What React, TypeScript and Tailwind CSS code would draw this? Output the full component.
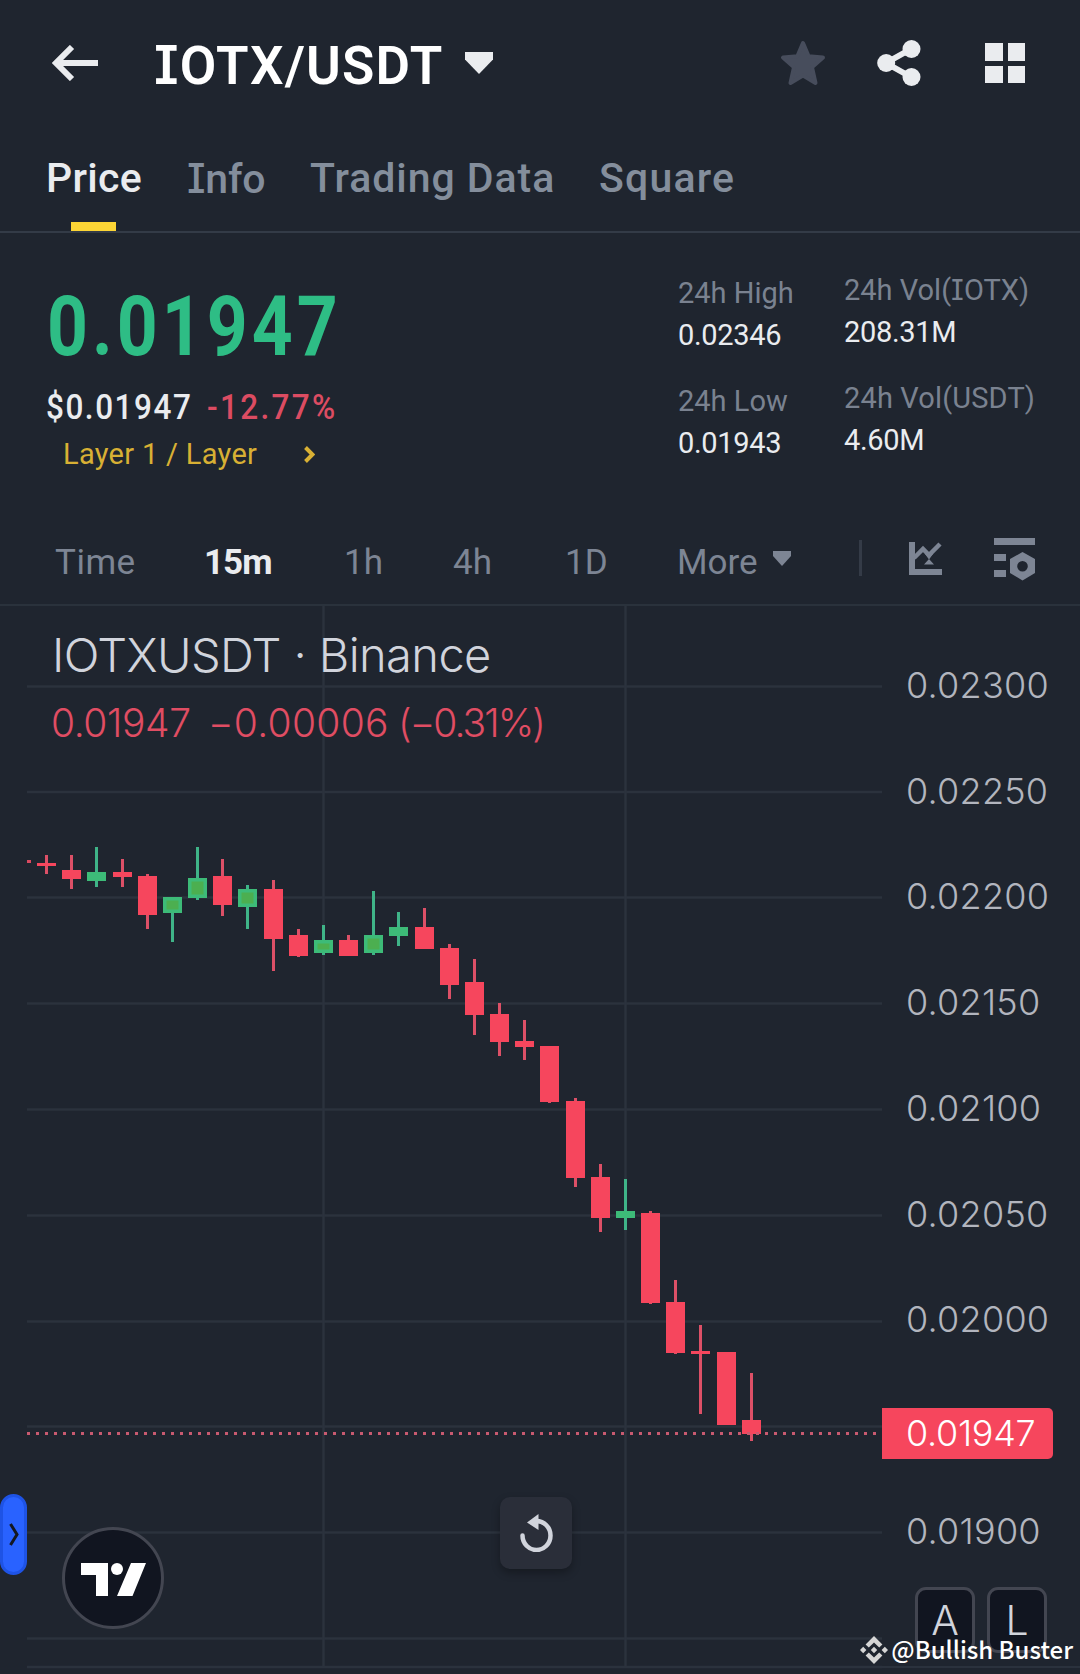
import type { ReactNode } from "react";

type Candle = [x: number, top: number, bottom: number, high: number, low: number, up?: boolean];

const candles: Candle[] = [
  [46.5, 863, 866, 855, 874],
  [71.5, 870, 879, 855, 889],
  [96.5, 872, 881, 847, 887, true],
  [122.5, 872, 877, 859, 887],
  [147.5, 876, 915, 874, 929],
  [172.5, 897, 913, 897, 942, true],
  [197.5, 878, 898, 847, 900, true],
  [222.5, 876, 905, 859, 916],
  [247.5, 889, 907, 885, 929, true],
  [273.5, 889, 939, 880, 971],
  [298.5, 935, 956, 929, 957],
  [323.5, 940, 953, 925, 955, true],
  [348.5, 940, 956, 935, 956],
  [373.5, 935, 953, 891, 955, true],
  [398.5, 927, 936, 912, 946, true],
  [424.5, 927, 949, 908, 949],
  [449.5, 948, 985, 944, 999],
  [474.5, 982, 1015, 959, 1035],
  [499.5, 1014, 1042, 1003, 1056],
  [524.5, 1041, 1047, 1020, 1060],
  [549.5, 1046, 1102, 1046, 1103],
  [575.5, 1101, 1178, 1098, 1187],
  [600.5, 1177, 1218, 1164, 1232],
  [625.5, 1211, 1218, 1179, 1230, true],
  [650.5, 1213, 1303, 1211, 1304],
  [675.5, 1302, 1353, 1280, 1354],
  [700.5, 1351, 1354, 1325, 1414],
  [726.5, 1352, 1425, 1352, 1425],
  [751.5, 1420, 1434, 1373, 1441],
];

const gridY = [686.5, 792, 897.5, 1003.5, 1109.5, 1215.5, 1321.5, 1426.5, 1532.5, 1638.5];

const axisLabels = ["0.02300", "0.02250", "0.02200", "0.02150", "0.02100", "0.02050", "0.02000", "", "0.01900"];

/* Capital I drawn with slab serifs, as in the brand typeface. */
function SerifI() {
  return <span className="font-['Inter'] [font-feature-settings:'cv08']">I</span>;
}

function Caret({ className }: { className: string }) {
  return (
    <svg viewBox="0 0 28 22" className={className} preserveAspectRatio="none">
      <path d="M0 0H28V7.5L14 22L0 7.5Z" fill="currentColor" />
    </svg>
  );
}

function Header() {
  return (
    <header className="flex h-[126px] items-center pl-[52px] text-[#eaecef]">
      <svg width="46" height="36" viewBox="0 0 46 36" fill="none" stroke="currentColor" strokeWidth="6">
        <path d="M46 18H5M20 2L4 18L20 34" />
      </svg>
      <h1 className="ml-[56px] w-[288px] pt-1.5 text-[53px] leading-none font-semibold tracking-[1.2px] whitespace-nowrap text-white">
        <SerifI />
        OTX/USDT
      </h1>
      <Caret className="ml-[23px] h-[22px] w-7" />
      <svg width="46" height="46" viewBox="0 0 46 46" className="ml-[287px] text-[#474d5c]">
        <path
          d="M23 3L28.6 16.2L43 17.5L32 27.2L35.5 43L23 35.6L10.5 43L14 27.2L3 17.5L17.4 16.2Z"
          fill="currentColor"
          stroke="currentColor"
          strokeWidth="4"
          strokeLinejoin="round"
        />
      </svg>
      <svg width="44" height="46" viewBox="0 0 44 46" className="ml-[51px]" fill="currentColor">
        <path d="M34 9L9 23L34 37" fill="none" stroke="currentColor" strokeWidth="6" />
        <circle cx="34.5" cy="9" r="9" />
        <circle cx="9.2" cy="23" r="9" />
        <circle cx="34.5" cy="37" r="9" />
      </svg>
      <div className="ml-[64px] grid h-10 w-10 grid-cols-2 gap-[5px]">
        <i className="bg-current" />
        <i className="bg-current" />
        <i className="bg-current" />
        <i className="bg-current" />
      </div>
    </header>
  );
}

function Tabs() {
  return (
    <nav className="flex h-[107px] border-b-2 border-[#333b47] pt-8 pl-[46px] text-[41px] leading-10 font-medium whitespace-nowrap text-[#848e9c]">
      <div className="flex w-[141px] flex-col tracking-[0.3px] text-[#eaecef]">
        <span>Price</span>
        <span className="mt-6 ml-[25px] h-[9px] w-[45px] bg-[#fcd535]" />
      </div>
      <span className="w-[123px] tracking-[-0.2px]">
        <SerifI />
        nfo
      </span>
      <span className="w-[289px] tracking-[0.95px]">Trading Data</span>
      <span className="tracking-[1.2px]">Square</span>
    </nav>
  );
}

function Stat({ label, value }: { label: ReactNode; value: string }) {
  return (
    <div className="text-[29px] leading-[42px] whitespace-nowrap">
      <div className="text-[#7a8290]">{label}</div>
      <div className="tracking-[-0.3px] text-[#eaecef]">{value}</div>
    </div>
  );
}

function Summary() {
  return (
    <section className="flex h-[287px]">
      <div className="w-[678px] pt-[52px] pl-[47px] whitespace-nowrap">
        <div className="origin-left scale-x-86 text-[83px] leading-[84px] font-bold tracking-[4.7px] text-[#2ebd85]">
          0.01947
        </div>
        <div className="-ml-px mt-[18px] flex text-[35px] leading-[42px] font-medium">
          <span className="w-[161px] origin-left scale-x-90 tracking-[1.7px] text-[#eaecef]">$0.01947</span>
          <span className="origin-left scale-x-90 tracking-[2.6px] text-[#dc4c62]">-12.77%</span>
        </div>
        <div className="mt-[7px] flex items-center pl-[16px] text-[29px] leading-9 text-[#d8b034]">
          <span className="w-[241px] tracking-[0.3px]">Layer 1 / Layer</span>
          <svg width="11" height="17" viewBox="0 0 11 17" fill="none" stroke="currentColor" strokeWidth="4">
            <path d="M1.5 1.5L8.5 8.5L1.5 15.5" />
          </svg>
        </div>
      </div>
      <div className="flex w-[166px] flex-col gap-6 pt-[39px]">
        <Stat label="24h High" value="0.02346" />
        <Stat label="24h Low" value="0.01943" />
      </div>
      <div className="flex flex-col gap-6 pt-9">
        <Stat
          label={
            <>
              24h Vol(
              <SerifI />
              OTX)
            </>
          }
          value="208.31M"
        />
        <Stat label={<span className="tracking-[0.15px]">24h Vol(USDT)</span>} value="4.60M" />
      </div>
    </section>
  );
}

function Intervals() {
  return (
    <div className="flex h-[86px] items-center border-b-2 border-[#2a323c] pl-[55px] text-[35px] leading-none whitespace-nowrap text-[#7d8594]">
      <span className="w-[149px] tracking-[0.5px]">Time</span>
      <span className="w-[140px] font-bold tracking-[-1px] text-[#eaecef]">15m</span>
      <span className="w-[109px]">1h</span>
      <span className="w-[112px]">4h</span>
      <span className="w-[112px]">1D</span>
      <span className="w-[96px]">More</span>
      <Caret className="mb-2 h-[15px] w-[18px]" />
      <span className="mb-2 ml-[68px] h-9 w-[3px] bg-[#343b47]" />
      <svg width="34" height="33" viewBox="0 0 34 33" className="mb-2 ml-[47px]" fill="none" stroke="currentColor">
        <path d="M3 0V30H33" strokeWidth="6" />
        <path d="M5 16L14 7L20 13L31 2" strokeWidth="4.5" />
        <path d="M20 17L25 22.5H15ZM16 12H24L20 17.5Z" fill="currentColor" stroke="none" />
      </svg>
      <svg width="42" height="43" viewBox="0 0 42 43" className="mb-1.5 ml-[51px]" fill="currentColor">
        <path d="M0 0H41V7H0ZM0 16H12V23H0ZM0 32H12V39H0Z" />
        <path
          fillRule="evenodd"
          d="M28.5 14L41 21V35L28.5 42.5L16 35V21ZM28.5 23A5.3 5.3 0 1 0 28.5 33.6A5.3 5.3 0 1 0 28.5 23Z"
        />
      </svg>
    </div>
  );
}

function CandlePlot() {
  return (
    <svg width="882" height="1068" viewBox="0 606 882 1068" className="shrink-0">
      <g stroke="#2b323d" strokeWidth="2.5">
        {gridY.map((y) => (
          <path key={y} d={`M27 ${y}H882`} />
        ))}
        <path d="M27 1667H882M323.5 606V1666M625.5 606V1666" />
      </g>
      <rect x="27" y="860" width="4" height="3" fill="#d94a60" />
      {candles.map(([x, top, bottom, high, low, up]) => (
        <g key={x}>
          <rect x={x - 1.5} y={high} width="3" height={low - high} fill={up ? "#3fb488" : "#dc5067"} />
          <rect x={x - 9.5} y={top} width="19" height={bottom - top} fill={up ? "#3dbb78" : "#f6465d"} />
          {up && bottom - top > 10 && (
            <rect x={x - 6} y={top + 3.5} width="12" height={bottom - top - 7} fill="#4caf50" />
          )}
        </g>
      ))}
      <path d="M27 1433.5H880" stroke="#c85a70" strokeWidth="3" strokeDasharray="3 6" />
    </svg>
  );
}

function ScaleButton({ children }: { children: string }) {
  return (
    <span className="flex h-[66px] w-[60px] items-center justify-center rounded-[11px] border-3 border-[#434651] bg-[#111520] text-[41px] leading-none font-light text-[#d1d4dc]">
      {children}
    </span>
  );
}

function PriceAxis() {
  return (
    <div className="relative w-[198px] pt-[27px] font-['Inter'] text-[36px] font-[350] text-[#b2b5be]">
      {axisLabels.map((label, i) => (
        <div key={i} className="h-[105.72px] pt-[30px] pl-[24px] leading-[44px] tracking-[0.25px]">
          {label}
        </div>
      ))}
      <div className="absolute top-[802px] left-0 flex h-[51px] w-[171px] items-center rounded-r-[5px] bg-[#f6465d] pb-px pl-6 tracking-[-0.3px] text-white">
        0.01947
      </div>
      <div className="absolute top-[981px] left-[33px] flex gap-3">
        <ScaleButton>A</ScaleButton>
        <ScaleButton>L</ScaleButton>
      </div>
      <div className="absolute top-[1060px] left-0 h-[2px] w-full bg-[#2b323d]" />
    </div>
  );
}

function Watermark() {
  return (
    <div className="absolute right-[7px] bottom-[6px] flex items-center font-['Noto_Sans_CJK_SC','Noto_Sans',sans-serif] text-[24px] leading-9 font-medium whitespace-nowrap text-white">
      <svg width="28" height="28" viewBox="0 0 28 28" fill="#d6d6d6" className="mr-[3px]">
        <path d="M14 0L22.4 8.4L19.2 11.6L14 6.4L8.8 11.6L5.6 8.4Z" />
        <path d="M14 28L5.6 19.6L8.8 16.4L14 21.6L19.2 16.4L22.4 19.6Z" />
        <path d="M14 10.8L17.2 14L14 17.2L10.8 14ZM3.2 10.8L6.4 14L3.2 17.2L0 14ZM24.8 10.8L28 14L24.8 17.2L21.6 14Z" />
      </svg>
      <span className="relative -top-px">@Bullish Buster</span>
    </div>
  );
}

function Chart() {
  return (
    <section className="relative flex h-[1068px] overflow-hidden">
      <CandlePlot />
      <PriceAxis />
      <div className="absolute top-[24px] left-[51px] font-['Inter'] font-[350] whitespace-nowrap">
        <div className="ml-px text-[47px] leading-[50px] tracking-[-0.6px] text-[#d1d4dc]">IOTXUSDT · Binance</div>
        <div className="mt-[18px] flex text-[39px] leading-[50px] text-[#e04d63]">
          <span className="w-[157px] tracking-[-0.4px]">0.01947</span>
          <span className="w-[190px] tracking-[0.3px]">−0.00006</span>
          <span className="tracking-[-1.9px]">(−0.31%)</span>
        </div>
      </div>
      <div className="absolute top-[888px] left-0 flex h-[81px] w-[27px] items-center justify-center rounded-full border-3 border-[#1e53e5] bg-[#2962ff]">
        <svg width="10" height="23" viewBox="0 0 10 23" fill="none" stroke="#131722" strokeWidth="3">
          <path d="M1.5 1L8 11.5L1.5 22" />
        </svg>
      </div>
      <div className="absolute top-[920.5px] left-[61.5px] flex size-[102px] items-center justify-center rounded-full border-[3px] border-[#434651] bg-[#111520]">
        <svg width="65" height="33" viewBox="0 0 65 33" fill="#fff" className="mt-1 ml-0.5">
          <path d="M0 0H27V33H15V12H0ZM50 0H65L51.5 33H36Z" />
          <circle cx="36" cy="6" r="6" />
        </svg>
      </div>
      <div className="absolute top-[891px] left-[500px] flex size-[72px] items-center justify-center rounded-[10px] bg-[#2a2e39] shadow-[0_4px_8px_rgba(0,0,0,0.3)]">
        <svg width="34" height="38" viewBox="0 0 34 38" fill="none">
          <path d="M3.5 21.5A14 14.5 0 1 0 17.5 7" stroke="#d1d4dc" strokeWidth="4.5" strokeLinecap="round" />
          <path d="M8 8.5L19.5 0V16Z" fill="#d1d4dc" />
        </svg>
      </div>
      <Watermark />
    </section>
  );
}

export default function App() {
  return (
    <main className="h-[1674px] w-[1080px] overflow-hidden bg-[#1f252f] font-['Roboto',sans-serif]">
      <Header />
      <Tabs />
      <Summary />
      <Intervals />
      <Chart />
    </main>
  );
}
